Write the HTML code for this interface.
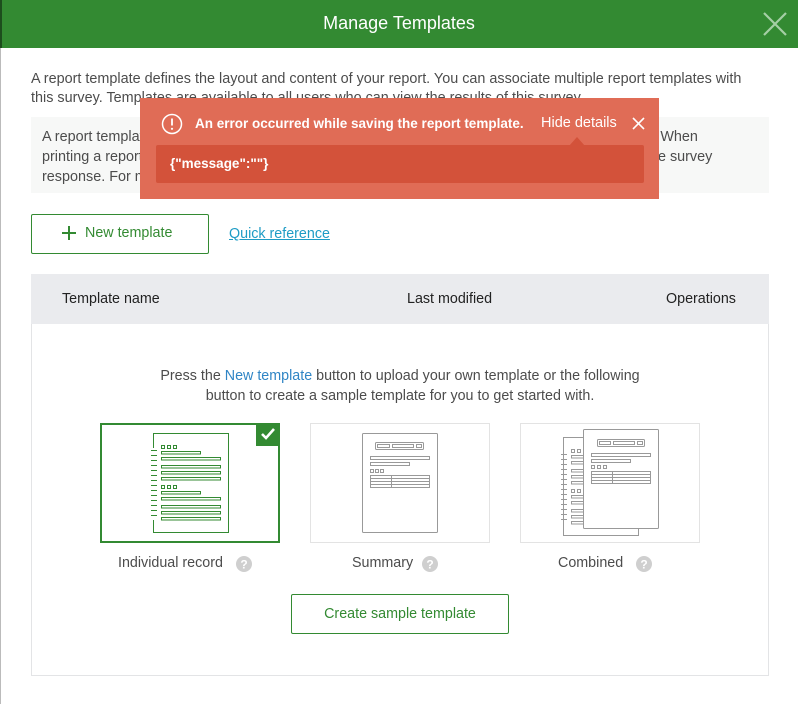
<!DOCTYPE html>
<html><head><meta charset="utf-8"><style>
*{margin:0;padding:0;box-sizing:border-box}
body{width:798px;height:704px;background:#fff;font-family:"Liberation Sans",sans-serif;color:#4c4c4c;position:relative;overflow:hidden}
.a{position:absolute;white-space:nowrap}
.hdr{left:0;top:0;width:798px;height:48px;background:#338a32}
</style></head><body>
<div class="a hdr"></div>
<div class="a" style="left:0;top:0;width:2px;height:48px;background:#1d4d1d"></div>
<div class="a" style="left:0;top:13px;width:798px;text-align:center;color:#fff;font-size:18px">Manage Templates</div>
<svg class="a" style="left:762px;top:11px" width="26" height="26"><path d="M2 2L24 24M24 2L2 24" stroke="#a5cfa5" stroke-width="2.2"/></svg>
<div class="a" style="left:0;top:48px;width:1px;height:656px;background:#bbb"></div>

<div class="a" style="left:31px;top:70px;font-size:14.4px;line-height:19px">A report template defines the layout and content of your report. You can associate multiple report templates with<br>this survey. Templates are available to all users who can view the results of this survey.</div>
<div class="a" style="left:31px;top:117px;width:738px;height:76px;background:#f7f8f7"></div>
<div class="a" style="left:42px;top:127px;font-size:14.4px;line-height:20px">A report template can include text, images, tables, and field placeholders using a specific syntax. When<br>printing a report, placeholders in the template are replaced with the corresponding values from the survey<br>response. For more information, see the quick reference.</div>

<div class="a" style="left:140px;top:98px;width:519px;height:101px;background:#e06c56"></div>
<svg class="a" style="left:161px;top:113px" width="22" height="22"><circle cx="11" cy="11" r="9.5" fill="none" stroke="#fff" stroke-width="1.5"/><path d="M11 5.5V12.5" stroke="#fff" stroke-width="1.8"/><circle cx="11" cy="15.8" r="1.1" fill="#fff"/></svg>
<div class="a" style="left:195px;top:116px;color:#fff;font-weight:bold;font-size:13.5px">An error occurred while saving the report template.</div>
<div class="a" style="left:541px;top:115px;color:#fff;font-size:14.5px">Hide details</div>
<svg class="a" style="left:632px;top:117px" width="13" height="13"><path d="M1 1L12 12M12 1L1 12" stroke="#fff" stroke-width="1.6"/></svg>
<div class="a" style="left:156px;top:145px;width:488px;height:38px;background:#d3523a;border-radius:2px"></div>
<svg class="a" style="left:569px;top:135px" width="16" height="11"><path d="M0 11L8 2L16 11Z" fill="#d3523a"/></svg>
<div class="a" style="left:170px;top:156px;color:#fff;font-weight:bold;font-size:13.5px">{"message":""}</div>

<div class="a" style="left:31px;top:214px;width:178px;height:40px;border:1px solid #338a32;border-radius:2px"></div>
<svg class="a" style="left:61px;top:225px" width="16" height="16"><path d="M8 1V15M1 8H15" stroke="#338a32" stroke-width="2"/></svg>
<div class="a" style="left:85px;top:225px;color:#338a32;font-size:14.3px">New template</div>
<div class="a" style="left:229px;top:226px;color:#1e9cc5;font-size:14.3px;text-decoration:underline">Quick reference</div>

<div class="a" style="left:31px;top:274px;width:738px;height:402px;border:1px solid #e3e4e6"></div>
<div class="a" style="left:31px;top:274px;width:738px;height:50px;background:#eaebee"></div>
<div class="a" style="left:62px;top:291px;color:#222;font-size:14.3px">Template name</div>
<div class="a" style="left:407px;top:291px;color:#222;font-size:14.3px">Last modified</div>
<div class="a" style="left:666px;top:291px;color:#222;font-size:14.3px">Operations</div>

<div class="a" style="left:0;top:366px;width:800px;text-align:center;font-size:14.3px;line-height:20px">Press the <span style="color:#2f85c5">New template</span> button to upload your own template or the following<br>button to create a sample template for you to get started with.</div>

<!-- card1 -->
<div class="a" style="left:100px;top:423px;width:180px;height:120px;border:2px solid #338a32"></div>
<div class="a" style="left:256px;top:423px;width:24px;height:23px;background:#338a32"></div>
<svg class="a" style="left:259px;top:426px" width="18" height="16"><path d="M3 8L7 12L15 3" fill="none" stroke="#fff" stroke-width="2.6"/></svg>
<svg class="a" style="left:100px;top:423px" width="180" height="120" fill="none" stroke="#338a32" stroke-width="1">
<path d="M53.5 25V10.5H128.5V109.5H53.5V97"/>
<path d="M51 27.5H57M51 32.5H57M51 37.5H57M51 42.5H57M51 47.5H57M51 52.5H57M51 57.5H57M51 62.5H57M51 67.5H57M51 72.5H57M51 77.5H57M51 82.5H57M51 87.5H57M51 92.5H57"/>
<rect x="61.5" y="22.5" width="3" height="3"/><rect x="67.5" y="22.5" width="3" height="3"/><rect x="73.5" y="22.5" width="3" height="3"/>
<rect x="61.5" y="28.5" width="39" height="2.5"/><rect x="61.5" y="34.5" width="59" height="2.5"/><rect x="61.5" y="42.5" width="59" height="2.5"/><rect x="61.5" y="48.5" width="59" height="2.5"/><rect x="61.5" y="54.5" width="59" height="2.5"/>
<rect x="61.5" y="62.5" width="3" height="3"/><rect x="67.5" y="62.5" width="3" height="3"/><rect x="73.5" y="62.5" width="3" height="3"/>
<rect x="61.5" y="68.5" width="39" height="2.5"/><rect x="61.5" y="74.5" width="59" height="2.5"/><rect x="61.5" y="82.5" width="59" height="2.5"/><rect x="61.5" y="88.5" width="59" height="2.5"/><rect x="61.5" y="94.5" width="59" height="2.5"/>
</svg>
<!-- card2 -->
<div class="a" style="left:310px;top:423px;width:180px;height:120px;border:1px solid #e3e3e3"></div>
<svg class="a" style="left:310px;top:423px" width="180" height="120" fill="none" stroke="#999" stroke-width="1">
<rect x="52.5" y="10.5" width="75" height="99" rx="1"/>
<rect x="65.5" y="19.5" width="48" height="7" rx="1"/><rect x="67.5" y="21.5" width="12" height="3"/><rect x="82.5" y="21.5" width="21" height="3"/><rect x="106.5" y="21.5" width="5" height="3"/>
<rect x="60.5" y="33.5" width="59" height="3"/><rect x="60.5" y="39.5" width="39" height="3"/>
<rect x="60.5" y="46.5" width="3" height="3"/><rect x="65.5" y="46.5" width="3" height="3"/><rect x="70.5" y="46.5" width="3" height="3"/>
<rect x="60.5" y="52.5" width="59" height="12"/><path d="M60.5 55.5H119.5M60.5 58.5H119.5M60.5 61.5H119.5M81.5 52.5V64.5"/>
</svg>
<!-- card3 -->
<div class="a" style="left:520px;top:423px;width:180px;height:120px;border:1px solid #e3e3e3"></div>
<svg class="a" style="left:520px;top:423px" width="180" height="120" fill="none" stroke="#999" stroke-width="1">
<path d="M63 14.5H43.5V112.5H118.5V105"/>
<path d="M41 31.5H47M41 36.5H47M41 41.5H47M41 46.5H47M41 51.5H47M41 56.5H47M41 61.5H47M41 66.5H47M41 71.5H47M41 76.5H47M41 81.5H47M41 86.5H47M41 91.5H47M41 96.5H47"/>
<rect x="51.5" y="26.5" width="3" height="3"/><rect x="57.5" y="26.5" width="3" height="3"/>
<rect x="51.5" y="32.5" width="12" height="2.5"/><rect x="51.5" y="38.5" width="12" height="2.5"/><rect x="51.5" y="46.5" width="12" height="2.5"/><rect x="51.5" y="52.5" width="12" height="2.5"/><rect x="51.5" y="58.5" width="12" height="2.5"/>
<rect x="51.5" y="66.5" width="3" height="3"/><rect x="57.5" y="66.5" width="3" height="3"/>
<rect x="51.5" y="72.5" width="12" height="2.5"/><rect x="51.5" y="78.5" width="12" height="2.5"/><rect x="51.5" y="86.5" width="12" height="2.5"/><rect x="51.5" y="92.5" width="12" height="2.5"/><rect x="51.5" y="98.5" width="12" height="2.5"/>
<rect x="63.5" y="6.5" width="75" height="99" rx="1" fill="#fff"/>
<rect x="77.5" y="16.5" width="47" height="7" rx="1"/><rect x="79.5" y="18.5" width="11" height="3"/><rect x="93.5" y="18.5" width="21" height="3"/><rect x="117.5" y="18.5" width="5" height="3"/>
<rect x="71.5" y="30.5" width="59" height="3"/><rect x="71.5" y="36.5" width="39" height="3"/>
<rect x="71.5" y="42.5" width="3" height="3"/><rect x="77.5" y="42.5" width="3" height="3"/><rect x="83.5" y="42.5" width="3" height="3"/>
<rect x="71.5" y="48.5" width="59" height="12"/><path d="M71.5 51.5H130.5M71.5 54.5H130.5M71.5 57.5H130.5M92.5 48.5V60.5"/>
</svg>

<div class="a" style="left:118px;top:555px;font-size:14.3px">Individual record</div>
<div class="a" style="left:352px;top:555px;font-size:14.3px">Summary</div>
<div class="a" style="left:558px;top:555px;font-size:14.3px">Combined</div>
<svg class="a" style="left:236px;top:556px" width="16" height="16"><circle cx="8" cy="8" r="8" fill="#cfcfcf"/><text x="8" y="12.5" font-size="12" font-weight="bold" fill="#fff" text-anchor="middle" font-family="Liberation Sans">?</text></svg>
<svg class="a" style="left:422px;top:556px" width="16" height="16"><circle cx="8" cy="8" r="8" fill="#cfcfcf"/><text x="8" y="12.5" font-size="12" font-weight="bold" fill="#fff" text-anchor="middle" font-family="Liberation Sans">?</text></svg>
<svg class="a" style="left:636px;top:556px" width="16" height="16"><circle cx="8" cy="8" r="8" fill="#cfcfcf"/><text x="8" y="12.5" font-size="12" font-weight="bold" fill="#fff" text-anchor="middle" font-family="Liberation Sans">?</text></svg>

<div class="a" style="left:291px;top:594px;width:218px;height:40px;border:1px solid #338a32;border-radius:2px;text-align:center;line-height:38px;color:#338a32;font-size:14.3px">Create sample template</div>
</body></html>
